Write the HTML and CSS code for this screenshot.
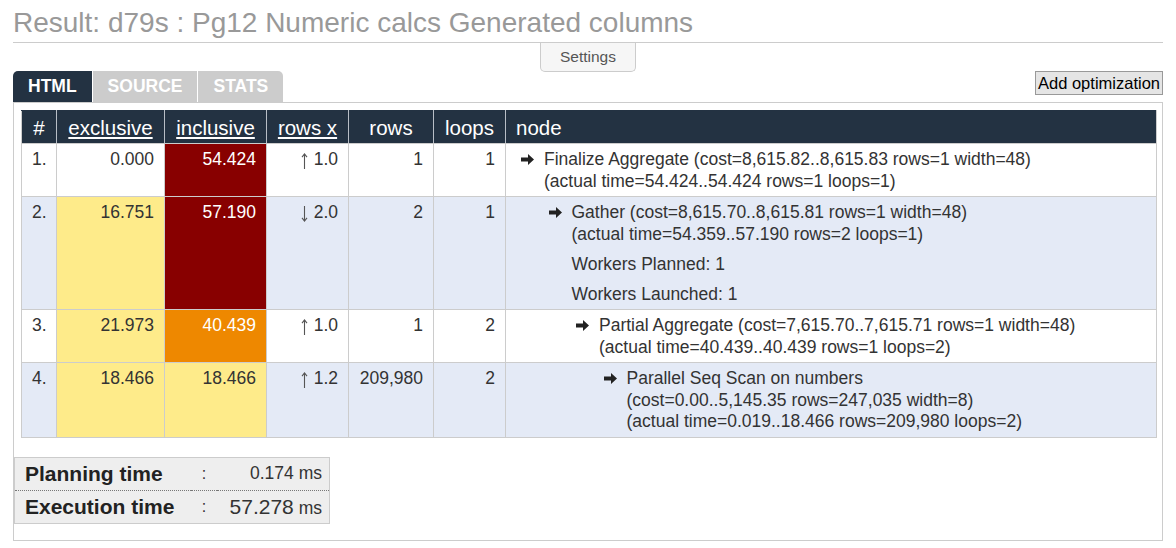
FILE: index.html
```html
<!DOCTYPE html>
<html>
<head>
  <meta charset="utf-8">
  <title>Result: d79s : Pg12 Numeric calcs Generated columns</title>
  <link rel="stylesheet" href="styles.css">
</head>
<body>
  <div class="page">
    <div class="page-head">
      <h1>Result: d79s : Pg12 Numeric calcs Generated columns</h1>
    </div>
    <div class="settings-wrap">
      <a class="settings" href="#">Settings</a>
    </div>
    <div class="tab-bar">
      <ul class="tabs">
        <li class="tab active">HTML</li>
        <li class="tab">SOURCE</li>
        <li class="tab last">STATS</li>
      </ul>
      <button class="add-opt" type="button">Add optimization</button>
    </div>
    <div class="result-box">
      <table class="plan">
        <colgroup>
          <col class="c-num"><col class="c-excl"><col class="c-incl"><col class="c-rowsx">
          <col class="c-rows"><col class="c-loops"><col>
        </colgroup>
        <thead>
          <tr>
            <th class="center">#</th>
            <th class="center"><a href="#">exclusive</a></th>
            <th class="center"><a href="#">inclusive</a></th>
            <th class="center"><a href="#">rows x</a></th>
            <th class="center">rows</th>
            <th class="center">loops</th>
            <th class="left">node</th>
          </tr>
        </thead>
        <tbody>
          <tr class="odd">
            <td class="n">1.</td>
            <td class="r">0.000</td>
            <td class="r hot">54.424</td>
            <td class="r"><svg class="dir" width="7" height="16" viewBox="0 0 7 16"><path d="M3.5 1v15M1 4.2L3.5 1 6 4.2" fill="none" stroke="#555" stroke-width="1.1"/></svg> 1.0</td>
            <td class="r">1</td>
            <td class="r">1</td>
            <td class="node">
              <div class="plan-node">
                <span class="arrow"><svg width="13" height="11" viewBox="0 0 13 11"><path d="M0 3.5h7V0l6 5.5-6 5.5V7.5H0z" fill="#222"/></svg></span>
                <div class="node-text">
                  Finalize Aggregate (cost=8,615.82..8,615.83 rows=1 width=48)<br>
                  (actual time=54.424..54.424 rows=1 loops=1)
                </div>
              </div>
            </td>
          </tr>
          <tr class="even">
            <td class="n">2.</td>
            <td class="r warm1">16.751</td>
            <td class="r hot">57.190</td>
            <td class="r"><svg class="dir" width="7" height="16" viewBox="0 0 7 16"><path d="M3.5 0v15M1 11.8L3.5 15 6 11.8" fill="none" stroke="#555" stroke-width="1.1"/></svg> 2.0</td>
            <td class="r">2</td>
            <td class="r">1</td>
            <td class="node">
              <div class="plan-node lvl1">
                <span class="arrow"><svg width="13" height="11" viewBox="0 0 13 11"><path d="M0 3.5h7V0l6 5.5-6 5.5V7.5H0z" fill="#222"/></svg></span>
                <div class="node-text">
                  Gather (cost=8,615.70..8,615.81 rows=1 width=48)<br>
                  (actual time=54.359..57.190 rows=2 loops=1)
                  <p class="extra">Workers Planned: 1</p>
                  <p class="extra">Workers Launched: 1</p>
                </div>
              </div>
            </td>
          </tr>
          <tr class="odd">
            <td class="n">3.</td>
            <td class="r warm1">21.973</td>
            <td class="r warm3">40.439</td>
            <td class="r"><svg class="dir" width="7" height="16" viewBox="0 0 7 16"><path d="M3.5 1v15M1 4.2L3.5 1 6 4.2" fill="none" stroke="#555" stroke-width="1.1"/></svg> 1.0</td>
            <td class="r">1</td>
            <td class="r">2</td>
            <td class="node">
              <div class="plan-node lvl2">
                <span class="arrow"><svg width="13" height="11" viewBox="0 0 13 11"><path d="M0 3.5h7V0l6 5.5-6 5.5V7.5H0z" fill="#222"/></svg></span>
                <div class="node-text">
                  Partial Aggregate (cost=7,615.70..7,615.71 rows=1 width=48)<br>
                  (actual time=40.439..40.439 rows=1 loops=2)
                </div>
              </div>
            </td>
          </tr>
          <tr class="even">
            <td class="n">4.</td>
            <td class="r warm1">18.466</td>
            <td class="r warm1">18.466</td>
            <td class="r"><svg class="dir" width="7" height="16" viewBox="0 0 7 16"><path d="M3.5 1v15M1 4.2L3.5 1 6 4.2" fill="none" stroke="#555" stroke-width="1.1"/></svg> 1.2</td>
            <td class="r">209,980</td>
            <td class="r">2</td>
            <td class="node">
              <div class="plan-node lvl3">
                <span class="arrow"><svg width="13" height="11" viewBox="0 0 13 11"><path d="M0 3.5h7V0l6 5.5-6 5.5V7.5H0z" fill="#222"/></svg></span>
                <div class="node-text">
                  Parallel Seq Scan on numbers<br>
                  (cost=0.00..5,145.35 rows=247,035 width=8)<br>
                  (actual time=0.019..18.466 rows=209,980 loops=2)
                </div>
              </div>
            </td>
          </tr>
        </tbody>
      </table>

      <table class="stats">
        <tr class="first">
          <th>Planning time</th>
          <td class="sep">:</td>
          <td class="val"><span class="small">0.174</span> ms</td>
        </tr>
        <tr>
          <th>Execution time</th>
          <td class="sep">:</td>
          <td class="val"><span class="big">57.278</span> ms</td>
        </tr>
      </table>
    </div>
  </div>
</body>
</html>
```

FILE: styles.css
```css
body {
  margin: 0;
  font: 17.5px "Liberation Sans", Arial, sans-serif;
  color: #333;
  background: #fff;
}
.page {
  padding: 0 13px;
}
.page-head {
  padding: 8px 0 4px;
  border-bottom: 1px solid #ccc;
}
h1 {
  margin: 0;
  font-size: 28px;
  font-weight: normal;
  line-height: 30px;
  color: #999;
}
.settings-wrap {
  display: flex;
  justify-content: center;
}
.settings {
  display: block;
  height: 28px;
  line-height: 27px;
  padding: 0 19px;
  font-size: 15.5px;
  color: #555;
  text-decoration: none;
  background: #f6f6f6;
  border: 1px solid #ccc;
  border-top: none;
  border-radius: 0 0 5px 5px;
}
.tab-bar {
  display: flex;
  justify-content: space-between;
  align-items: flex-start;
  margin-top: -1px;
}
.tabs {
  display: flex;
  gap: 1px;
  margin: 0;
  padding: 0;
  list-style: none;
}
.tab {
  height: 31px;
  line-height: 31px;
  padding: 0 15px;
  font-size: 17.5px;
  font-weight: bold;
  color: #fff;
  background: #ccc;
}
.tab.active {
  background: #233242;
  border-radius: 5px 0 0 0;
}
.tab.last {
  border-radius: 0 5px 0 0;
}
.add-opt {
  height: 24px;
  margin-top: 0;
  padding: 0 2px;
  font: 16.5px "Liberation Sans", Arial, sans-serif;
  color: #000;
  background: #e5e5e5;
  border: 1px solid #999;
  border-radius: 0;
}
.result-box {
  border: 1px solid #ccc;
  padding: 7px 5px 16px 0;
}
.plan {
  width: calc(100% - 7px);
  margin: 0 0 19px 7px;
  border-collapse: collapse;
  table-layout: fixed;
}
.c-num { width: 35px; }
.c-excl { width: 108px; }
.c-incl { width: 102px; }
.c-rowsx { width: 82px; }
.c-rows { width: 85px; }
.c-loops { width: 72px; }
.plan th {
  height: 32px;
  padding: 0 10px;
  font-size: 20.5px;
  line-height: 23px;
  font-weight: normal;
  color: #fff;
  background: #233242;
  border: 1px solid #b8bec6;
  border-top-color: #233242;
  border-bottom-color: #ccc;
}
.plan th:first-child { border-left-color: #ccc; }
.plan th:last-child { border-right-color: #ccc; }
.plan th a {
  color: #fff;
}
.center { text-align: center; }
.left { text-align: left; }
.plan td {
  padding: 5px 10px 4px;
  line-height: 21.5px;
  vertical-align: top;
  border: 1px solid #ccc;
}
.plan tr.even td { background: #e4eaf6; }
.plan td.r { text-align: right; }
.plan td.n { text-align: left; }
.plan tr td.warm1 { background: #feeb8a; }
.plan tr td.warm3 { background: #ee8800; color: #fff; }
.plan tr td.hot { background: #880000; color: #fff; }
.dir {
  vertical-align: -4px;
  margin-right: 1px;
}
.plan-node {
  display: flex;
}
.plan-node.lvl1 { margin-left: 27.5px; }
.plan-node.lvl2 { margin-left: 55px; }
.plan-node.lvl3 { margin-left: 82.5px; }
.arrow {
  flex: none;
  width: 23px;
  padding-left: 5px;
  padding-top: 5px;
  line-height: 0;
}
.node-text .extra {
  margin: 8.5px 0 0;
}
.stats {
  border-collapse: collapse;
  background: #eee;
  border: 1px solid #ccc;
  width: 316px;
}
.stats th, .stats td {
  height: 32px;
  padding: 0;
}
.stats tr.first th, .stats tr.first td {
  border-bottom: 1px dotted #777;
}
.stats th {
  width: 166px;
  padding-left: 10px;
  text-align: left;
  font-size: 21px;
  color: #222;
}
.stats .sep {
  width: 26px;
  text-align: center;
  font-size: 16px;
}
.stats .val {
  text-align: right;
  padding-right: 7px;
}
.stats .small { font-size: 17.5px; }
.stats .big { font-size: 21px; }
```
